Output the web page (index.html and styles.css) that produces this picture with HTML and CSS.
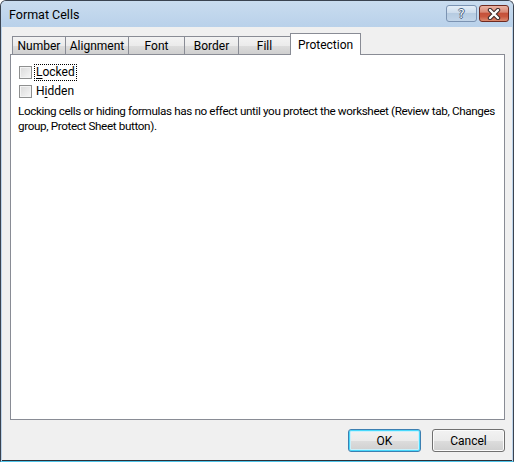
FILE: index.html
```html
<!DOCTYPE html>
<html>
<head>
<meta charset="utf-8">
<link rel="stylesheet" href="styles.css">
</head>
<body>
<div class="window">
  <div class="titlebar">
    <div class="title">Format Cells</div>
    <div class="caption-buttons">
      <div class="cbtn help"><span>?</span></div>
      <div class="cbtn close">
        <svg width="18" height="12" viewBox="0 0 18 12">
          <path d="M5 2 L13 10 M13 2 L5 10" stroke="#3a2a2a" stroke-width="4.4" stroke-linecap="round"/>
          <path d="M5 2 L13 10 M13 2 L5 10" stroke="#ffffff" stroke-width="2.4" stroke-linecap="round"/>
        </svg>
      </div>
    </div>
  </div>
  <div class="client">
    <div class="tabs">
      <div class="tab w-number">Number</div>
      <div class="tab w-align">Alignment</div>
      <div class="tab w-font">Font</div>
      <div class="tab w-border">Border</div>
      <div class="tab w-fill">Fill</div>
      <div class="tab active w-prot">Protection</div>
    </div>
    <div class="panel">
      <div class="check-row">
        <span class="box"></span>
        <span class="label focus"><u>L</u>ocked</span>
      </div>
      <div class="check-row">
        <span class="box"></span>
        <span class="label">H<u>i</u>dden</span>
      </div>
      <p class="desc">Locking cells or hiding formulas has no effect until you protect the worksheet (Review tab, Changes<br>group, Protect Sheet button).</p>
    </div>
    <div class="buttons">
      <div class="btn default">OK</div>
      <div class="btn">Cancel</div>
    </div>
  </div>
</div>
</body>
</html>
```
FILE: styles.css
```css
html, body {
  margin: 0;
  padding: 0;
  background: #ffffff;
}
body {
  font-family: Roboto, "Noto Sans", sans-serif;
  font-size: 12px;
  color: #000;
}
.window {
  box-sizing: border-box;
  width: 514px;
  height: 462px;
  border: 1px solid #3a4350;
  border-bottom: 1px solid #4fc3e8;
  border-radius: 6px 6px 0 0;
  background: #bcd3ea;
  display: flex;
  flex-direction: column;
  overflow: hidden;
}
.titlebar {
  height: 26px;
  flex: none;
  display: flex;
  align-items: flex-start;
  justify-content: space-between;
  background: linear-gradient(#c9dcef, #b9d1ea);
}
.title {
  padding: 6px 0 0 8px;
  font-size: 12.5px;
  line-height: 16px;
  color: #000;
}
.caption-buttons {
  display: flex;
  gap: 2px;
  padding: 4px 4px 0 0;
}
.cbtn {
  box-sizing: border-box;
  height: 17px;
  border-radius: 3px;
  display: flex;
  align-items: center;
  justify-content: center;
}
.help {
  width: 31px;
  border: 1px solid #7b93b2;
  background: linear-gradient(#e4eef8 0%, #cddcec 45%, #b6cbe1 50%, #c2d5e9 100%);
}
.help span {
  font-family: "DejaVu Sans", sans-serif;
  font-size: 12px;
  line-height: 12px;
  color: #ffffff;
  text-shadow: 1px 0 0 #46607e, -1px 0 0 #46607e, 0 1px 0 #46607e, 0 -1px 0 #46607e;
}
.close {
  width: 30px;
  border: 1px solid #6e2a20;
  background: linear-gradient(#eab3a3 0%, #d98a76 40%, #c5513a 50%, #c9583f 70%, #dc8a6f 100%);
}
.client {
  flex: 1;
  background: #f0f0f0;
  margin: 0 1px 0 1px;
  border-bottom: 1px solid #2b3038;
  padding: 6px 0 0 8px;
  display: flex;
  flex-direction: column;
}
.tabs {
  display: flex;
  align-items: flex-end;
  padding-left: 2px;
  height: 21px;
  position: relative;
  z-index: 1;
}
.tab {
  box-sizing: border-box;
  height: 18px;
  border: 1px solid #898c95;
  border-bottom: none;
  margin-right: -1px;
  background: linear-gradient(#f3f3f3 0%, #ebebeb 50%, #dddddd 51%, #cfcfcf 100%);
  text-align: center;
  line-height: 18px;
  font-size: 12px;
}
.tab.active {
  height: 22px;
  margin-bottom: -1px;
  background: #ffffff;
  line-height: 22px;
  padding-bottom: 4px;
}
.w-number { width: 54px; }
.w-align { width: 64px; }
.w-font { width: 57px; }
.w-border { width: 55px; }
.w-fill { width: 53px; }
.w-prot { width: 71px; }
.panel {
  box-sizing: border-box;
  width: 495px;
  height: 366px;
  border: 1px solid #898c95;
  background: #ffffff;
  padding: 8px 0 0 8px;
}
.check-row {
  display: flex;
  align-items: center;
  height: 19px;
}
.box {
  box-sizing: border-box;
  width: 13px;
  height: 13px;
  border: 1px solid #8e8f8f;
  background: linear-gradient(135deg, #d9d9d9, #f7f7f7);
  box-shadow: inset 0 0 0 1px #f4f4f4;
  flex: none;
}
.label {
  margin-left: 2px;
  padding: 0 1px;
  line-height: 15px;
  border: 1px solid transparent;
}
.label.focus {
  border: 1px dotted #000;
}
.label u {
  text-decoration-thickness: 1px;
  text-underline-offset: 2px;
}
.desc {
  margin: 3px 0 0 -1px;
  line-height: 15px;
  font-size: 11.7px;
  letter-spacing: -0.37px;
  white-space: nowrap;
}
.buttons {
  display: flex;
  gap: 11px;
  justify-content: flex-end;
  width: 495px;
  margin-top: 9px;
}
.btn {
  box-sizing: border-box;
  width: 73px;
  height: 23px;
  border: 1px solid #707070;
  border-radius: 3px;
  background: linear-gradient(#f2f2f2 0%, #ebebeb 50%, #dddddd 51%, #cfcfcf 100%);
  box-shadow: inset 0 0 0 1px #fbfbfb;
  display: flex;
  align-items: center;
  justify-content: center;
  font-size: 12px;
}
.btn.default {
  border-color: #3c7fb1;
  box-shadow: inset 0 0 0 1px #48d8fb, inset 0 0 0 2px #c9f0fb;
}
```
